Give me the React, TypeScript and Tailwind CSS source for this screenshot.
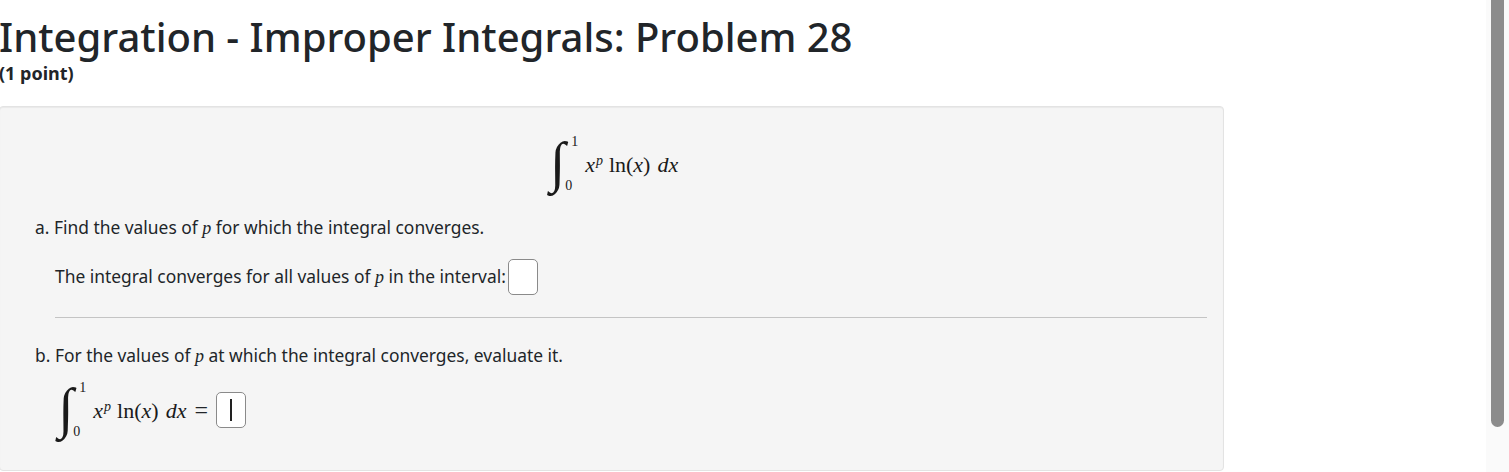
import React from "react";

const SANS = "font-['Noto_Sans','Open_Sans',sans-serif]";
const SERIF = "font-['Liberation_Serif','DejaVu_Serif',serif]";

function V({ children }: { children: React.ReactNode }) {
  return <span className={`${SERIF} italic text-[18px]`}>{children}</span>;
}

function Integrand() {
  return (
    <span className={`${SERIF} text-[22px] whitespace-nowrap text-[#1a1a1a]`}>
      <i>x</i>
      <sup className="ml-[1px] text-[14px] italic">p</sup>
      <span className="ml-[6px]">ln(</span>
      <i>x</i>
      <span>)</span>
      <i className="ml-[7px]">dx</i>
    </span>
  );
}

function IntSign() {
  return (
    <>
      <span className={`${SERIF} -mt-[4px] text-[56px] leading-none italic text-[#1a1a1a]`}>∫</span>
      <span className={`${SERIF} flex h-[58px] flex-col justify-between text-[14px] leading-none text-[#1a1a1a]`}>
        <span className="ml-[6px]">1</span>
        <span>0</span>
      </span>
    </>
  );
}

function AnswerBox({ caret = false }: { caret?: boolean }) {
  return (
    <span className="inline-flex h-[36px] w-[30px] items-center justify-center rounded-[5px] border border-[#8a8a8a] bg-white align-middle">
      {caret && <span className="h-[22px] w-[1.5px] bg-[#222]" />}
    </span>
  );
}

export default function App() {
  return (
    <div className={`relative h-[472px] overflow-hidden bg-white text-[#212529] ${SANS}`}>
      <div className="pr-[285px]">
        <h1 className="-ml-[1px] pt-[13px] text-[40px] leading-[48px] font-medium whitespace-nowrap">
          Integration - Improper Integrals: Problem 28
        </h1>
        <div className="-ml-[1px] text-[18px] leading-[24px] font-bold">(1 point)</div>

        <div className="-ml-[1px] mt-[21px] h-[365px] rounded-[4px] border border-[#e3e3e3] bg-[#f5f5f5] pl-[35px] pr-[16px] shadow-[inset_0_1px_1px_rgba(0,0,0,0.05)]">
          <div className="flex justify-center pt-[28px] pr-[14px]">
            <span className="inline-flex items-center">
              <IntSign />
              <span className="ml-[7px]">
                <Integrand />
              </span>
            </span>
          </div>

          <p className="mt-[21px] text-[17.4px] leading-[26px]">
            a. Find the values of <V>p</V> for which the integral converges.
          </p>

          <div className="mt-[18px] flex items-center pl-[20px] text-[17.4px]">
            <span>
              The integral converges for all values of <V>p</V> in the interval:
            </span>
            <span className="ml-[2px]">
              <AnswerBox />
            </span>
          </div>

          <div className="mt-[22px] ml-[20px] border-t border-[#c4c4c4]" />

          <p className="mt-[24px] text-[17.4px] leading-[26px]">
            b. For the values of <V>p</V> at which the integral converges, evaluate it.
          </p>

          <div className="mt-[12px] flex items-center pl-[23px]">
            <span className="inline-flex items-center">
              <IntSign />
              <span className="ml-[7px]">
                <Integrand />
              </span>
              <span className={`${SERIF} mx-[8px] text-[24px] leading-none`}>=</span>
              <AnswerBox caret />
            </span>
          </div>
        </div>
      </div>

      {/* scrollbar */}
      <div className="absolute top-0 right-0 h-full w-[23px] bg-[#fafafa]">
        <div className="absolute top-0 left-[5px] h-[427px] w-[13px] rounded-b-full bg-[#8c8c8c]" />
      </div>
    </div>
  );
}
